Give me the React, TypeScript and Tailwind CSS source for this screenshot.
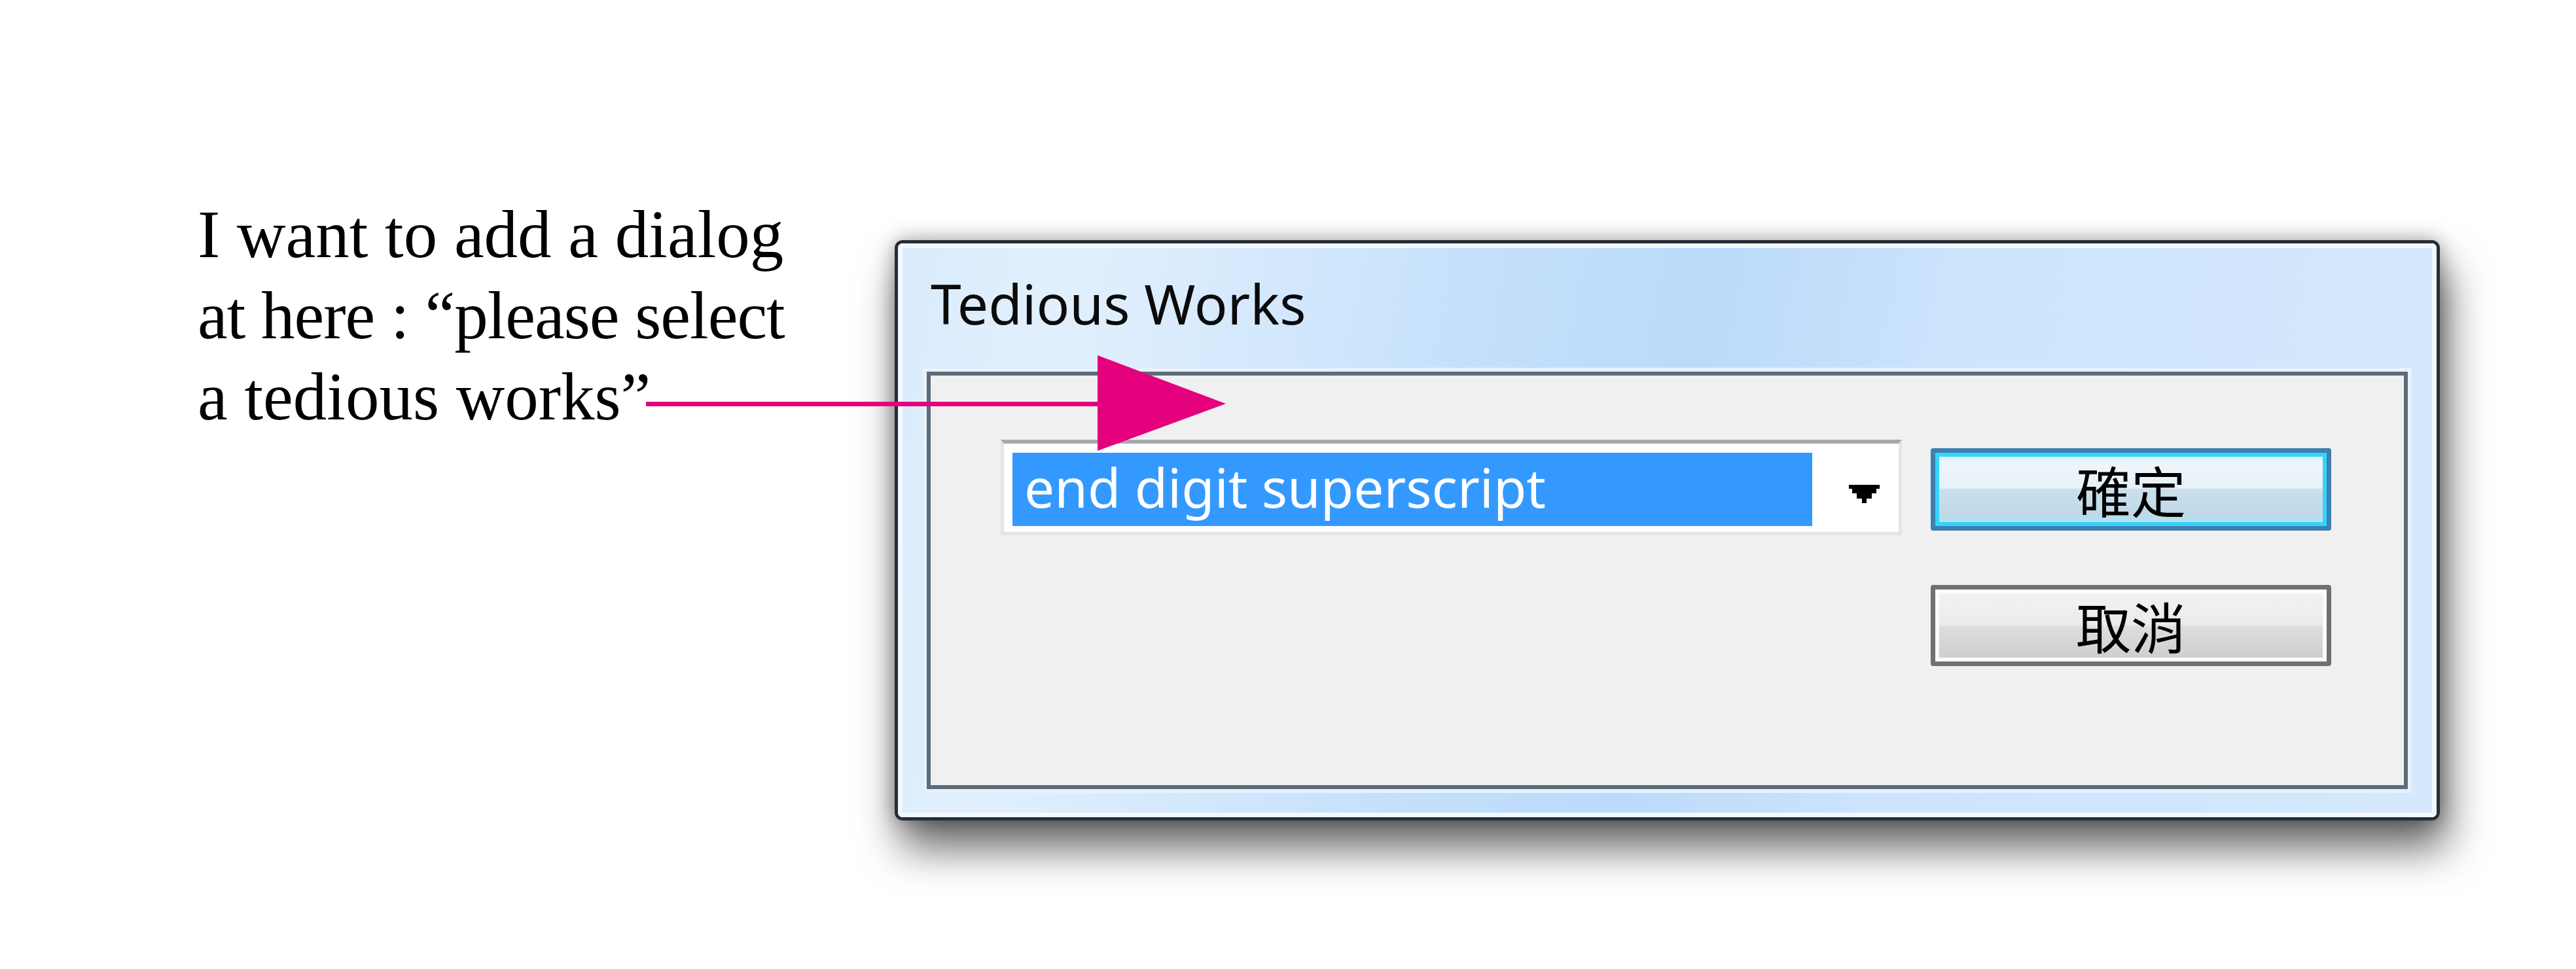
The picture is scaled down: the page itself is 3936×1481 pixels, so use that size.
import React from "react";

function DropArrow() {
  return (
    <svg width="47" height="28" viewBox="0 0 47 28" className="block">
      <path d="M0 0H47V6H42V13H35V21H27V28H20V21H12V13H5V6H0Z" fill="#000" />
    </svg>
  );
}

function PointerArrow() {
  return (
    <svg
      width="886"
      height="146"
      viewBox="0 0 886 146"
      className="pointer-events-none absolute left-[987px] top-[543px]"
    >
      <rect x="0" y="71" width="700" height="7" fill="#e5007e" />
      <polygon points="690,0 886,74 690,146" fill="#e5007e" />
    </svg>
  );
}

function Dialog() {
  return (
    <div className="mt-[367px] h-[887px] w-[2361px] rounded-[12px] border-[5px] border-[#262d36] shadow-[10px_42px_65px_rgba(0,0,0,0.6),0_0_30px_rgba(0,0,0,0.35)]">
      <div className="flex h-full flex-col rounded-[7px] border-[7px] border-[#f2f8fe] bg-[linear-gradient(100deg,#d9ebfc_0%,#e2f0fd_10%,#d2e7fc_25%,#c4e0fb_36%,#bbdafa_50%,#cde4fc_66%,#d5e8fc_100%)] px-[31px] pb-[30px]">
        {/* title bar */}
        <div className="h-[183px] shrink-0 pl-[12px] pt-[28px]">
          <span className="font-['Noto_Sans',sans-serif] text-[84px] leading-[114px] text-[#0b0b0b]">
            Tedious Works
          </span>
        </div>

        {/* client area */}
        <div className="flex-1 border-[6px] border-[#e6f1fc]">
          <div className="flex h-full items-start border-[6px] border-[#5b6b7b] bg-[#f0f0f0] pl-[107px] pt-[98px]">
            {/* combo box */}
            <div className="flex h-[146px] w-[1377px] items-start border-[5px] border-t-[6px] border-[#e1e4e8] border-t-[#a6a9ad] bg-white pl-[13px] pt-[14px]">
              <div className="h-[112px] w-[1222px] bg-[#3399ff] pl-[18px]">
                <span className="whitespace-nowrap font-['Noto_Sans',sans-serif] text-[82px] leading-[104px] text-white">
                  end digit superscript
                </span>
              </div>
              <div className="ml-[56px] mt-[49px]">
                <DropArrow />
              </div>
            </div>

            {/* buttons */}
            <div className="ml-[44px] mt-[13px] flex flex-col gap-[83px]">
              <div className="h-[126px] w-[612px] rounded-[4px] border-[7px] border-[#3c7fb1]">
                <div className="flex h-full items-center justify-center border-[6px] border-[#37d3fb] bg-[linear-gradient(to_bottom,#d8f3fd_0%,#eef6fb_10%,#e6f1f8_48%,#cbe0ec_50%,#bfd8e7_90%,#a9e6f9_100%)]">
                  <span className="font-['Noto_Sans_CJK_TC','Noto_Sans_CJK_SC',sans-serif] text-[84px] leading-none text-black">
                    確定
                  </span>
                </div>
              </div>
              <div className="h-[124px] w-[612px] rounded-[4px] border-[7px] border-[#707070]">
                <div className="flex h-full items-center justify-center border-[6px] border-[#fbfbfb] bg-[linear-gradient(to_bottom,#f2f2f2_0%,#ebebeb_48%,#dddddd_52%,#cfcfcf_100%)]">
                  <span className="font-['Noto_Sans_CJK_TC','Noto_Sans_CJK_SC',sans-serif] text-[84px] leading-none text-black">
                    取消
                  </span>
                </div>
              </div>
            </div>
          </div>
        </div>
      </div>
    </div>
  );
}

export default function App() {
  return (
    <div className="relative flex h-[1481px] w-[3936px] items-start overflow-hidden bg-white pl-[302px]">
      <div className="mt-[296px] w-[1065px] shrink-0 whitespace-nowrap font-['Liberation_Serif',serif] text-[103px] leading-[124px] text-black">
        <p>I want to add a dialog</p>
        <p className="tracking-[-1px]">at here : “please select</p>
        <p>a tedious works”</p>
      </div>
      <Dialog />
      <PointerArrow />
    </div>
  );
}
